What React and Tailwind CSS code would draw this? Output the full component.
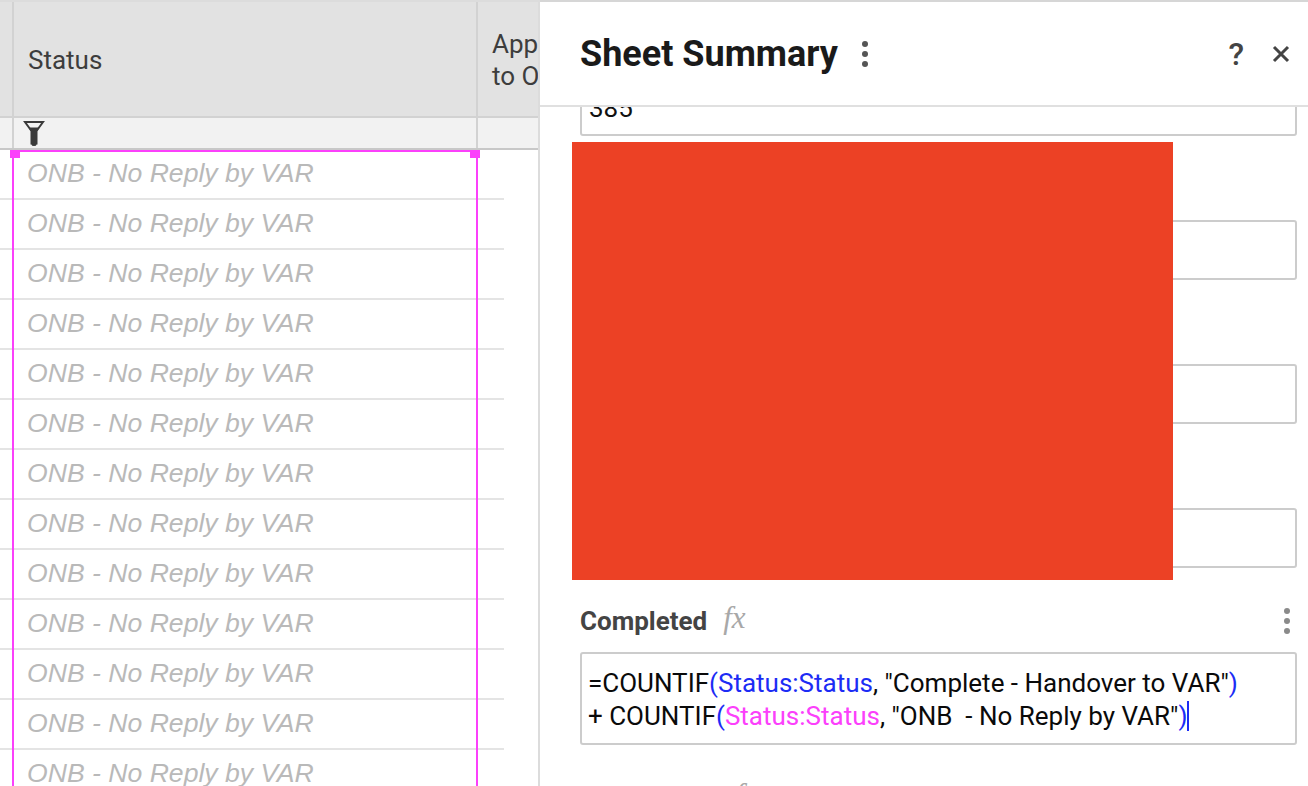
const rows = Array.from({ length: 13 });

function Dots({ className }) {
  return (
    <span className={"flex flex-col items-center gap-[4px] " + className}>
      <span className="h-[6px] w-[6px] rounded-full bg-current" />
      <span className="h-[6px] w-[6px] rounded-full bg-current" />
      <span className="h-[6px] w-[6px] rounded-full bg-current" />
    </span>
  );
}

function Fx() {
  return (
    <span className="font-['Liberation_Serif',serif] text-[31px] leading-none italic text-[#a8a8a8]">
      fx
    </span>
  );
}

function SheetColumn() {
  return (
    <div className="relative h-full w-[540px] shrink-0 overflow-hidden border-t-2 border-r-2 border-[#dcdcdc] bg-white font-['Roboto',sans-serif]">
      {/* cabecera */}
      <div className="flex h-[116px] border-b-2 border-[#d2d2d2] bg-[#e2e2e2] text-[#3d3d3d]">
        <div className="w-[14px] shrink-0 border-r-2 border-[#d2d2d2]" />
        <div className="flex w-[464px] shrink-0 items-center border-r-2 border-[#d2d2d2] pt-[2px] pl-[14px] text-[26px]">
          Status
        </div>
        <div className="flex flex-1 items-center overflow-hidden pt-[2px] pl-[14px] text-[26px] leading-[32px] whitespace-nowrap">
          <div>
            App
            <br />
            to O
          </div>
        </div>
      </div>

      {/* fila del filtro */}
      <div className="flex h-[32px] border-b-2 border-[#c8c8c8] bg-[#f2f2f2]">
        <div className="w-[14px] shrink-0 border-r-2 border-[#d2d2d2]" />
        <div className="flex w-[464px] shrink-0 items-center border-r-2 border-[#d2d2d2] pl-[9px]">
          <svg width="22" height="26" viewBox="0 0 22 26">
            <path d="M2 2h18L13.5 11v12.5h-5V11z" fill="none" stroke="#3a3a3a" strokeWidth="2" />
            <path d="M5.5 7.5h11L13.5 12v12.5a2.5 1.5 0 0 1-5 0V12z" fill="#3a3a3a" />
          </svg>
        </div>
      </div>

      {/* filas */}
      <div className="w-[504px]">
        {rows.map((_, i) => (
          <div
            key={i}
            className="flex h-[50px] items-center border-b-2 border-[#e4e4e4] pl-[27px] font-['Liberation_Sans',sans-serif] text-[26.6px] italic text-[#b9b9b9]"
          >
            ONB - No Reply by VAR
          </div>
        ))}
      </div>

      {/* seleccion */}
      <div className="absolute top-[148px] left-[12px] h-[700px] w-[466px] border-2 border-[#fb40fb]" />
      <div className="absolute top-[148px] left-[10px] h-[8px] w-[10px] bg-[#fb40fb]" />
      <div className="absolute top-[148px] left-[470px] h-[8px] w-[10px] bg-[#fb40fb]" />
    </div>
  );
}

function Field({ children, box = "h-[60px]" }) {
  return (
    <div className={"rounded-[3px] border-2 border-[#cccccc] bg-white " + box}>{children}</div>
  );
}

function SummaryPanel() {
  return (
    <div className="relative flex h-full min-w-0 flex-1 flex-col overflow-hidden border-t-2 border-[#d6d6d6] bg-white font-['Roboto',sans-serif]">
      <div className="relative z-10 flex h-[105px] shrink-0 items-center border-b-2 border-[#e0e0e0] bg-white pr-[18px] pl-[40px]">
        <h1 className="text-[36px] font-bold text-[#1a1a1a]">Sheet Summary</h1>
        <Dots className="ml-[24px] text-[#555555]" />
        <span className="ml-auto text-[32px] font-medium text-[#444444]">?</span>
        <svg className="ml-[28px]" width="18" height="18" viewBox="0 0 18 18">
          <path d="M2 2l14 14M16 2L2 16" stroke="#444444" strokeWidth="3" fill="none" />
        </svg>
      </div>

      <div className="-mt-[31px] flex flex-col pr-[11px] pl-[40px]">
        <Field>
          <div className="px-[7px] pt-[11px] text-[26px] text-[#111111]">385</div>
        </Field>
        <div className="h-[84px]" />
        <Field />
        <div className="h-[84px]" />
        <Field />
        <div className="h-[84px]" />
        <Field />

        <div className="flex h-[84px] items-center pt-[22px]">
          <span className="text-[26px] font-bold text-[#444444]">Completed</span>
          <span className="ml-[16px] -translate-y-[3px]">
            <Fx />
          </span>
          <Dots className="mr-[7px] ml-auto text-[#8a8a8a]" />
        </div>
        <Field box="h-[93px]">
          <div className="px-[6px] pt-[13px] text-[26px] leading-[33px] whitespace-pre text-[#0a0a0a]">
            =COUNTIF<span className="text-[#1c2cf5]">(Status:Status</span>, "Complete - Handover to VAR"
            <span className="text-[#1c2cf5]">)</span>
            <br />
            + COUNTIF<span className="text-[#1c2cf5]">(</span>
            <span className="text-[#fb40fb]">Status:Status</span>, "ONB  - No Reply by VAR"
            <span className="border-r-2 border-[#1c2cf5] text-[#1c2cf5]">)</span>
          </div>
        </Field>
        <div className="mt-[34px] pl-[155px]">
          <Fx />
        </div>
      </div>
    </div>
  );
}

export default function App() {
  return (
    <div className="relative flex h-[786px] w-[1308px] overflow-hidden bg-white">
      <SheetColumn />
      <SummaryPanel />
      {/* bloque rojo que tapa campos */}
      <div className="absolute top-[142px] left-[572px] h-[438px] w-[601px] bg-[#ec4125]" />
    </div>
  );
}
